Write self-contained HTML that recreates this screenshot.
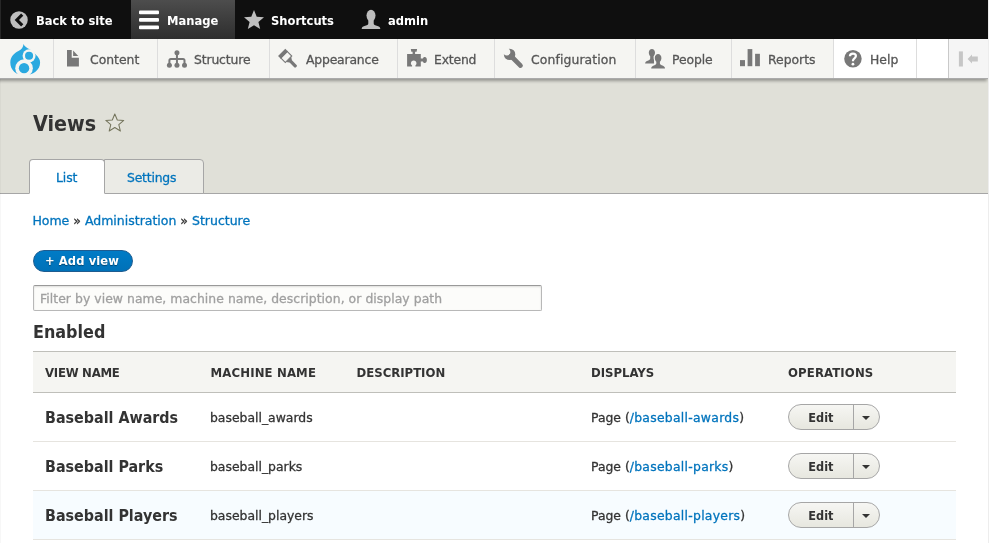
<!DOCTYPE html>
<html lang="en">
<head>
<meta charset="utf-8">
<title>Views | Drupal</title>
<style>
html,body{margin:0;padding:0;}
html{background:#ececea;}
body{width:989px;height:543px;position:relative;overflow:hidden;background:#fff;font-family:"DejaVu Sans","Liberation Sans",sans-serif;font-size:12.4px;color:#333;-webkit-text-stroke:0.3px;}
a{text-decoration:none;color:#0074bd;}
.abs{position:absolute;white-space:nowrap;}
.b{font-family:"DejaVu Sans Condensed","DejaVu Sans","Liberation Sans",sans-serif;font-weight:bold;-webkit-text-stroke:0;}
/* toolbar */
#bar{z-index:3;position:absolute;left:0;top:0;width:988px;height:39px;background:#0f0f0f;}
#bar .tab{position:absolute;top:0;height:39px;color:#fff;}
#bar .tab span{position:absolute;top:14px;line-height:13px;font-size:12.8px;white-space:nowrap;}
#bar .tab svg{position:absolute;top:10px;}
#manage{left:131px;width:104px;background:linear-gradient(#4d4d4d 0%,#404040 40%,#2e2e2e 100%);}
#tray{z-index:2;position:absolute;left:0;top:39px;width:988px;height:39px;background:#fff;border-bottom:1px solid #aaa;box-shadow:-2px 1px 3px 1px rgba(0,0,0,0.3333);}
#tray .it{position:absolute;top:0;height:39px;background:#f5f5f2;border-left:1px solid #ddd;color:#565656;}
#tray .it span{position:absolute;left:36px;top:14px;line-height:13px;font-size:12.4px;white-space:nowrap;}
#tray .it svg{position:absolute;left:9px;top:10px;}
/* header */
#hdr{position:absolute;left:0;top:79px;width:988px;height:114px;background:#e0e0d8;border-bottom:1px solid #a6a6a6;}
.ptab{position:absolute;top:159px;height:35px;border:1px solid #a6a6a6;box-sizing:border-box;text-align:center;line-height:35px;font-size:12.4px;}
/* table */
#tbl{position:absolute;left:33px;top:351px;width:923px;}
.th{position:absolute;left:0;top:0;width:923px;height:40px;background:#f5f5f2;border-top:1px solid #bfbfba;border-bottom:1px solid #bfbfba;}
.row{position:absolute;left:0;width:923px;height:48px;border-bottom:1px solid #e6e4df;}
.hd{position:absolute;top:14px;line-height:14px;font-size:13px;text-transform:uppercase;white-space:nowrap;color:#333;}
.vn{position:absolute;left:12px;top:15px;line-height:20px;font-size:15.9px;white-space:nowrap;color:#333;}
.c{position:absolute;top:16px;line-height:18px;font-size:12.4px;white-space:nowrap;color:#333;}
.c a{letter-spacing:0.27px;}
.drop{position:absolute;left:755px;top:11px;width:92px;height:26px;box-sizing:border-box;border:1px solid #a6a6a6;border-radius:13px;background:linear-gradient(#f6f6f3,#e7e7df);}
.drop i{position:absolute;left:64px;top:0;width:1px;height:24px;background:#a6a6a6;}
.drop b{position:absolute;left:19.300px;top:0;line-height:25px;font-size:12.6px;color:#333;}
.drop u{position:absolute;left:73px;top:11px;width:0;height:0;border-left:4px solid transparent;border-right:4px solid transparent;border-top:4px solid #333;}
</style>
</head>
<body>
<div id="wrap" style="position:absolute;left:0;top:0;width:989px;height:543px;will-change:transform;">
<div style="position:absolute;left:988px;top:0;width:1px;height:543px;background:#ededed;z-index:9"></div>
<div style="position:absolute;left:0;top:0;width:1px;height:39px;background:rgba(255,255,255,0.100);z-index:9"></div><div style="position:absolute;left:0;top:79px;width:1px;height:464px;background:rgba(0,0,0,0.030);z-index:9"></div>
<!-- toolbar bar -->
<div id="bar">
  <div class="tab" style="left:0;width:131px;">
    <svg style="left:9px" width="20" height="20" viewBox="0 0 16 16"><circle cx="8" cy="8" r="7" fill="#bebebe"/><path d="M9.700 4.600L6.300 8L9.700 11.400" fill="none" stroke="#0f0f0f" stroke-width="2.500" stroke-linecap="square" stroke-linejoin="miter"/></svg>
    <span class="b" style="left:36px">Back to site</span>
  </div>
  <div class="tab" id="manage">
    <svg style="left:8px;top:9.500px" width="20" height="20" viewBox="0 0 16 16"><g fill="#fff"><rect x="0" y="0.400" width="16" height="3" rx="0.900"/><rect x="0" y="6.400" width="16" height="3" rx="0.900"/><rect x="0" y="12.400" width="16" height="3" rx="0.900"/></g></svg>
    <span class="b" style="left:36px">Manage</span>
  </div>
  <div class="tab" style="left:235px;width:116px;">
    <svg style="left:9px" width="20" height="20" viewBox="0 0 16 16"><path fill="#bebebe" d="M8 0L10.170 5.410L15.990 5.800L11.520 9.540L12.940 15.200L8 12.100L3.060 15.200L4.480 9.540L0.010 5.800L5.830 5.410Z"/></svg>
    <span class="b" style="left:36px">Shortcuts</span>
  </div>
  <div class="tab" style="left:351px;width:96px;">
    <svg style="left:0;top:0" width="96" height="39" viewBox="351 0 96 39"><g fill="#bebebe"><ellipse cx="371" cy="15.600" rx="4.500" ry="5.800"/><path d="M361.700 29C361.700 27.300 362.600 26.600 364.500 26C366.800 25.300 368.300 24.800 368.300 23.400V19H373.700V23.400C373.700 24.800 375.200 25.300 377.500 26C379.400 26.600 380.300 27.300 380.300 29Z"/></g></svg>
    <span class="b" style="left:37px">admin</span>
  </div>
</div>
<!-- tray -->
<div id="tray">
  <div class="it" style="left:0;width:53px;border-left:0;">
  </div>
  <div class="it" style="left:53px;width:103px;">
    <span>Content</span>
  </div>
  <div class="it" style="left:157px;width:111px;">
    <span style="letter-spacing:-0.14px">Structure</span>
  </div>
  <div class="it" style="left:269px;width:127px;">
    <span style="letter-spacing:-0.18px">Appearance</span>
  </div>
  <div class="it" style="left:397px;width:96px;">
    <span style="letter-spacing:-0.18px">Extend</span>
  </div>
  <div class="it" style="left:494px;width:140px;">
    <span style="letter-spacing:0.11px">Configuration</span>
  </div>
  <div class="it" style="left:635px;width:95px;">
    <span style="letter-spacing:-0.11px">People</span>
  </div>
  <div class="it" style="left:731px;width:101px;">
    <span>Reports</span>
  </div>
  <div class="it" style="left:833px;width:83px;background:#fff;">
    <span>Help</span>
  </div>
  <div class="it" style="left:916px;width:31px;background:#fff;"></div>
  <div class="it" style="left:948px;width:39px;background:#f5f5f5;border-left:1px solid #c9c9c9;">
  </div>
<svg id="ticons" width="988" height="40" viewBox="0 39 988 40" style="position:absolute;left:0;top:0;pointer-events:none">
  <!-- drupal logo -->
  <path fill="#2ba9e0" d="M23.500 44C24.500 46.500 27 48 29.500 49.300C31.500 50.400 33.800 52.600 35.900 54.800C38.500 57.300 40.100 59.500 40.100 62.500C40.100 70 33 75.300 24.500 75.300C16 75.300 10.300 70 10.300 62.500C10.300 56.500 14.500 53 18.500 51C21.500 49.500 23.300 47.500 23.500 44Z"/>
  <circle cx="29.050" cy="55.800" r="6.500" fill="#f5f5f2"/><circle cx="24.050" cy="68.150" r="8.800" fill="#f5f5f2"/>
  <circle cx="29.050" cy="55.800" r="4.050" fill="#2ba9e0"/><circle cx="24.050" cy="68.150" r="5.200" fill="#2ba9e0"/>
  <g fill="#787878">
  <!-- file -->
  <path d="M67 50.100H71.700V57.800H78.900V66.400H67Z"/><path d="M73.100 50.600V55.900H78.300Z"/>
  <!-- structure -->
  <circle cx="176.950" cy="52.700" r="2.500"/><circle cx="169.400" cy="65.300" r="2.500"/><circle cx="176.950" cy="65.300" r="2.500"/><circle cx="184.500" cy="65.300" r="2.500"/>
  <path d="M169.400 65V60.400Q169.400 58.900 170.900 58.900H183Q184.500 58.900 184.500 60.400V65M176.950 52.700V65" fill="none" stroke="#787878" stroke-width="2"/>
  <!-- paintbrush -->
  <g transform="translate(285.300 56) rotate(-45)">
    <rect x="-5.100" y="-5.100" width="10.200" height="3.800"/>
    <rect x="-4.550" y="-1.800" width="9.100" height="6.350" fill="none" stroke="#787878" stroke-width="1.100"/>
    <path d="M-3.600 4.800H3.600L1.650 7.600H-1.650Z"/>
    <rect x="-1.650" y="6.500" width="3.300" height="9" rx="1.200"/>
  </g>
  <!-- puzzle -->
  <path d="M407.100 54.050H412.600V51.700H411.300L410.800 49.100H417.100L416.600 51.700H415.100V54.050H420.800V58.600H422.900C423.300 57.400 424 57 424.800 57C426 57 426.900 58.300 426.900 60C426.900 61.700 426 63 424.800 63C424 63 423.300 62.600 422.900 61.400H420.800V66.500H415.400V65.600C416.100 65.100 416.500 64.300 416.500 63.300C416.500 61.750 415.250 60.500 413.700 60.500C412.150 60.500 410.900 61.750 410.900 63.300C410.900 64.300 411.400 65.100 412.100 65.600V66.500H407.100Z"/>
  <!-- wrench -->
  <mask id="wm" maskUnits="userSpaceOnUse" x="495" y="40" width="40" height="40"><rect x="495" y="40" width="40" height="40" fill="#fff"/><circle cx="506.900" cy="52.100" r="3.450" fill="#000"/><path d="M504.460 54.540L498.460 48.540L503.340 43.660L509.340 49.660Z" fill="#000"/></mask>
  <g mask="url(#wm)"><circle cx="509.600" cy="54.400" r="5.700"/></g>
  <path d="M511 56L520.500 65.600" stroke="#787878" stroke-width="4.700" stroke-linecap="round" fill="none"/>
  <!-- people -->
  <path d="M645.100 63.600C645.100 61.600 646.500 61 648.300 60.400C649.700 59.900 650.200 59.400 650.200 58.300V56.300C649.300 55.400 648.800 54.100 648.800 52.600C648.800 50.500 650.100 48.900 651.900 48.900C653.700 48.900 655 50.500 655 52.600C655 54.100 654.500 55.400 653.600 56.300V58.300C653.600 59 653.700 59.400 654 59.700V63.600Z"/>
  <path stroke="#f5f5f2" stroke-width="1.200" paint-order="stroke" d="M651.200 68.600C651.200 66.500 652.600 65.800 654.500 65.200C656 64.700 656.300 64.100 656.300 63V61.700C655.300 60.800 654.800 59.500 654.800 58C654.800 55.800 656.200 54.100 658.100 54.100C660 54.100 661.400 55.800 661.400 58C661.400 59.500 660.900 60.800 659.900 61.700V63C659.900 64.100 660.200 64.700 661.700 65.200C663.600 65.800 665 66.500 665 68.600Z"/>
  <!-- reports -->
  <rect x="740" y="60.100" width="5" height="6.100"/><rect x="747.600" y="49.100" width="4.700" height="17.100"/><rect x="755.100" y="53.800" width="4.800" height="12.400"/>
  <!-- help -->
  <circle cx="852.950" cy="58.800" r="8.750"/>
  </g>
  <path d="M849.900 56.300C849.900 54.500 851.200 53.600 852.900 53.600C854.700 53.600 855.900 54.600 855.900 56.100C855.900 58.200 853 58.400 853 60.500V61.200" fill="none" stroke="#fff" stroke-width="2.200"/>
  <circle cx="852.950" cy="64.200" r="1.400" fill="#fff"/>
  <!-- toggle -->
  <g fill="#c6c6c6"><rect x="958.900" y="51.400" width="4" height="15.100"/><path d="M967.600 59L972 54.400V56.600H977.800V61.400H972V63.600Z"/></g>
</svg>
</div>
<!-- header -->
<div id="hdr"></div>
<div class="abs b" style="left:33px;top:109px;font-size:21.300px;line-height:30px;color:#333;">Views</div>
<svg class="abs" style="left:104.200px;top:112.400px" width="21.600" height="21.600" viewBox="0 0 20 20"><path fill="#e4e4dc" stroke="#74745c" stroke-width="0.950" stroke-linejoin="round" d="M10 1.800l2.300 5.600 6 .4-4.600 3.900 1.500 5.900L10 14.400 4.800 17.600l1.500-5.900L1.700 7.800l6-.4z"/></svg>
<div class="ptab" style="left:29px;width:76px;background:#fff;border-bottom-color:#fff;border-radius:4px 4px 0 0;text-align:left;z-index:1;"><a style="letter-spacing:-0.1px;position:absolute;left:26px;top:0">List</a></div>
<div class="ptab" style="left:104px;width:100px;background:#ebebe6;border-radius:0 4px 0 0;text-align:left;"><a style="letter-spacing:-0.2px;position:absolute;left:22px;top:0">Settings</a></div>
<!-- breadcrumb -->
<div class="abs" style="left:32.400px;top:212px;line-height:18px;font-size:12.5px;color:#333;"><a>Home</a> » <a>Administration</a> » <a>Structure</a></div>
<!-- add view -->
<div class="abs b" style="left:33px;top:250px;width:100px;height:22px;box-sizing:border-box;border:1px solid #1e5c90;border-radius:11px;background:linear-gradient(#007bc6,#0071b8);color:#fff;text-shadow:0 1px 1px rgba(0,0,0,0.4);font-size:12.8px;line-height:20px;text-align:left;padding-left:11px;letter-spacing:0.1px;">+ Add view</div>
<!-- filter -->
<div class="abs" style="left:33px;top:285px;width:509px;height:26px;box-sizing:border-box;border:1px solid #b8b8b8;border-top-color:#999;border-radius:2px;box-shadow:inset 0 1px 2px rgba(0,0,0,0.125);background:#fcfcfa;color:#a0a0a0;font-size:12.4px;line-height:26px;padding-left:6px;letter-spacing:0.05px;">Filter by view name, machine name, description, or display path</div>
<div class="abs b" style="left:33px;top:320px;font-size:17.8px;line-height:24px;color:#333;">Enabled</div>
<!-- table -->
<div id="tbl">
  <div class="th">
    <div class="hd b" style="left:12px;letter-spacing:-0.25px">View name</div>
    <div class="hd b" style="left:177.500px;letter-spacing:0.15px">Machine name</div>
    <div class="hd b" style="left:323.500px">Description</div>
    <div class="hd b" style="left:558px">Displays</div>
    <div class="hd b" style="left:755px;letter-spacing:0.14px">Operations</div>
  </div>
  <div class="row" style="top:42px">
    <div class="vn b">Baseball Awards</div>
    <div class="c" style="left:177px">baseball_awards</div>
    <div class="c" style="left:558px">Page (<a>/baseball-awards</a>)</div>
    <div class="drop"><b class="b">Edit</b><i></i><u></u></div>
  </div>
  <div class="row" style="top:91px">
    <div class="vn b">Baseball Parks</div>
    <div class="c" style="left:177px">baseball_parks</div>
    <div class="c" style="left:558px">Page (<a>/baseball-parks</a>)</div>
    <div class="drop"><b class="b">Edit</b><i></i><u></u></div>
  </div>
  <div class="row" style="top:140px;background:#f7fcff;">
    <div class="vn b">Baseball Players</div>
    <div class="c" style="left:177px">baseball_players</div>
    <div class="c" style="left:558px">Page (<a>/baseball-players</a>)</div>
    <div class="drop"><b class="b">Edit</b><i></i><u></u></div>
  </div>
</div>
</div>
</body>
</html>
